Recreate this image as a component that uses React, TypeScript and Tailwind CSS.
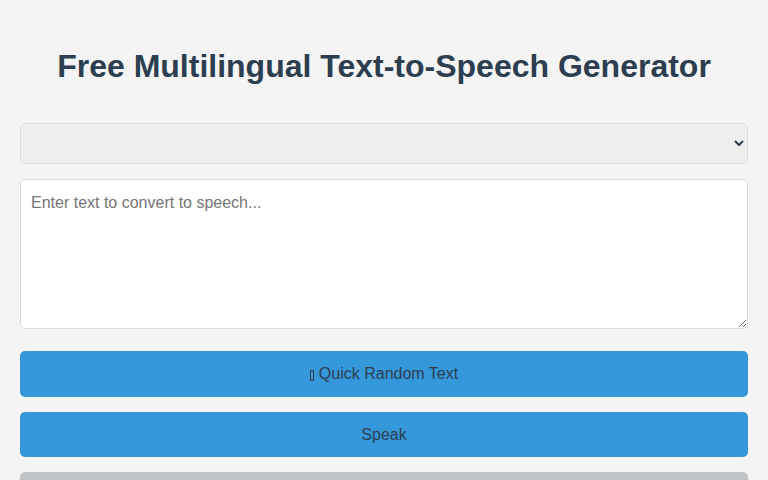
import React from "react";

export default function App() {
  return (
    <div className="min-h-screen bg-[#f4f4f4] px-5 pt-[45px] text-[#2c3e50]" style={{ fontFamily: '"Liberation Sans", Arial, sans-serif' }}>
      <h1 className="mb-[36px] text-center text-[32px] font-bold leading-[42px] text-[#2c3e50]">
        Free Multilingual Text-to-Speech Generator
      </h1>
      <select className="mb-[15px] block h-[41px] w-full appearance-auto rounded-[5px] border border-[#ddd] bg-[#efefef] px-2 text-base text-[#2c3e50]"></select>
      <textarea
        className="block h-[150px] w-full rounded-[5px] border border-[#ddd] bg-white px-[10px] pt-[14px] pb-[10px] text-base leading-[18px] text-[#2c3e50] placeholder:text-[#757575] outline-none"
        placeholder="Enter text to convert to speech..."
      ></textarea>
      <div className="mt-[22px] flex flex-col gap-[15px]">
        <button className="flex h-[46px] w-full items-center justify-center gap-[5px] rounded-[5px] bg-[#3498db] text-base text-[#2c3e50]">
          <span className="mt-[2px] inline-block h-[11px] w-[4px] border border-[#2c3e50]"></span>
          <span>Quick Random Text</span>
        </button>
        <button className="flex h-[45px] w-full items-center justify-center rounded-[5px] bg-[#3498db] text-base text-[#2c3e50]">
          Speak
        </button>
        <button className="flex h-[45px] w-full items-center justify-center rounded-[5px] bg-[#bdc3c7] text-base text-[#2c3e50]">
          Stop
        </button>
      </div>
    </div>
  );
}
